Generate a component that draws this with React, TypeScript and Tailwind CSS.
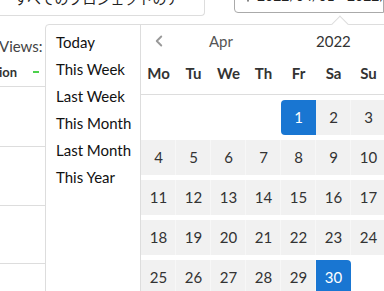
import React from "react";
import { ChevronLeft } from "lucide-react";

const RANGES = ["Today", "This Week", "Last Week", "This Month", "Last Month", "This Year"];
const DAY_NAMES = ["Mo", "Tu", "We", "Th", "Fr", "Sa", "Su"];

// April 2022 starts on a Friday; leading and trailing cells are hidden
const WEEKS: (number | null)[][] = [
  [null, null, null, null, 1, 2, 3],
  [4, 5, 6, 7, 8, 9, 10],
  [11, 12, 13, 14, 15, 16, 17],
  [18, 19, 20, 21, 22, 23, 24],
  [25, 26, 27, 28, 29, 30, null],
];

const START = 1;
const END = 30;

const DayCell = ({ day }: { day: number | null }) => {
  if (day === null) {
    return <div className="h-[35px] w-[35px]" />;
  }
  const isStart = day === START;
  const isEnd = day === END;
  const base = "flex h-[35px] w-[35px] items-center justify-center text-[15px]";

  if (isStart || isEnd) {
    return (
      <div
        className={`${base} bg-[#1976d2] text-white ${isStart ? "rounded-l-[4px]" : "rounded-r-[4px]"}`}
      >
        {day}
      </div>
    );
  }

  return <div className={`${base} bg-[#f1f1f1] text-[#333] shadow-[inset_-1px_0_0_#f7f7f7]`}>{day}</div>;
};

const App = () => {
  return (
    <div
      className="relative h-[291px] w-[384px] overflow-hidden bg-white"
      style={{ fontFamily: '"Lato", "Noto Sans CJK JP", sans-serif' }}
    >
      {/* page underneath the picker */}
      <div className="flex items-start">
        <div className="-mt-[14px] flex h-[30px] w-[205px] items-end overflow-hidden rounded-br-[4px] border-r border-b border-[#dddddd] pl-[14px] pb-[6px]">
          <span className="whitespace-nowrap text-[14px] leading-[20px] text-[#222]">
            すべてのプロジェクトのア
          </span>
        </div>
        <div className="-mt-[15px] ml-auto flex h-[28px] w-[150px] items-end gap-[8px] overflow-hidden rounded-bl-[4px] border border-[#aaaaaa] pl-[12px] pb-[7px]">
          <span className="mb-[3px] block h-[10px] w-[9px] rounded-[2px] border border-[#888]" />
          <span className="whitespace-nowrap text-[14px] leading-[18px] text-[#222]">2022/04/01 - 2022/04/30</span>
        </div>
      </div>

      <div className="mt-[21px] -ml-[1px] text-[15px] leading-[18px] text-[#444]">Views:</div>
      <div className="mt-[9px] flex items-center">
        <span className="-ml-[1px] text-[13px] font-bold leading-[16px] text-[#333]">ion</span>
        <span className="ml-[16px] block h-[2px] w-[6px] bg-[#4cd14c]" />
      </div>
      <div className="mt-[6px] h-[60px] border-t border-[#dddddd]" />
      <div className="h-[59px] border-t border-[#dddddd]" />
      <div className="h-[58px] border-t border-[#dddddd]" />
      <div className="border-t border-[#dddddd]" />

      {/* date range picker dropdown */}
      <div className="absolute top-[24px] left-[45px] -right-[10px] -bottom-[10px] flex rounded-tl-[4px] border border-[#dddddd] bg-white">
        <span className="absolute -top-[7px] left-[288px] block h-[12px] w-[12px] rotate-45 border-t border-l border-[#dddddd] bg-white" />

        <div className="w-[95px] shrink-0 border-r border-[#dddddd] pt-[4px] pl-[10px]">
          {RANGES.map((range) => (
            <div key={range} className="text-[15px] leading-[27px] text-[#111]">
              {range}
            </div>
          ))}
        </div>

        <div className="flex-1">
          <div className="flex h-[32px] items-center">
            <span className="flex w-[35px] justify-center text-[#999]">
              <ChevronLeft size={18} strokeWidth={2.5} />
            </span>
            <span className="ml-[33px] text-[15px] text-[#555]">Apr</span>
            <span className="ml-[83px] text-[15px] text-[#333]">2022</span>
          </div>
          <div className="flex h-[38px] border-b border-[#dddddd] pb-[5px]">
            {DAY_NAMES.map((name) => (
              <div key={name} className="flex w-[35px] items-center justify-center text-[15px] font-bold text-[#333]">
                {name}
              </div>
            ))}
          </div>
          <div className="flex flex-col gap-[5px] pt-[5px]">
            {WEEKS.map((week, i) => (
              <div key={i} className="flex">
                {week.map((day, j) => (
                  <DayCell key={j} day={day} />
                ))}
              </div>
            ))}
          </div>
        </div>
      </div>
    </div>
  );
};

export default App;
